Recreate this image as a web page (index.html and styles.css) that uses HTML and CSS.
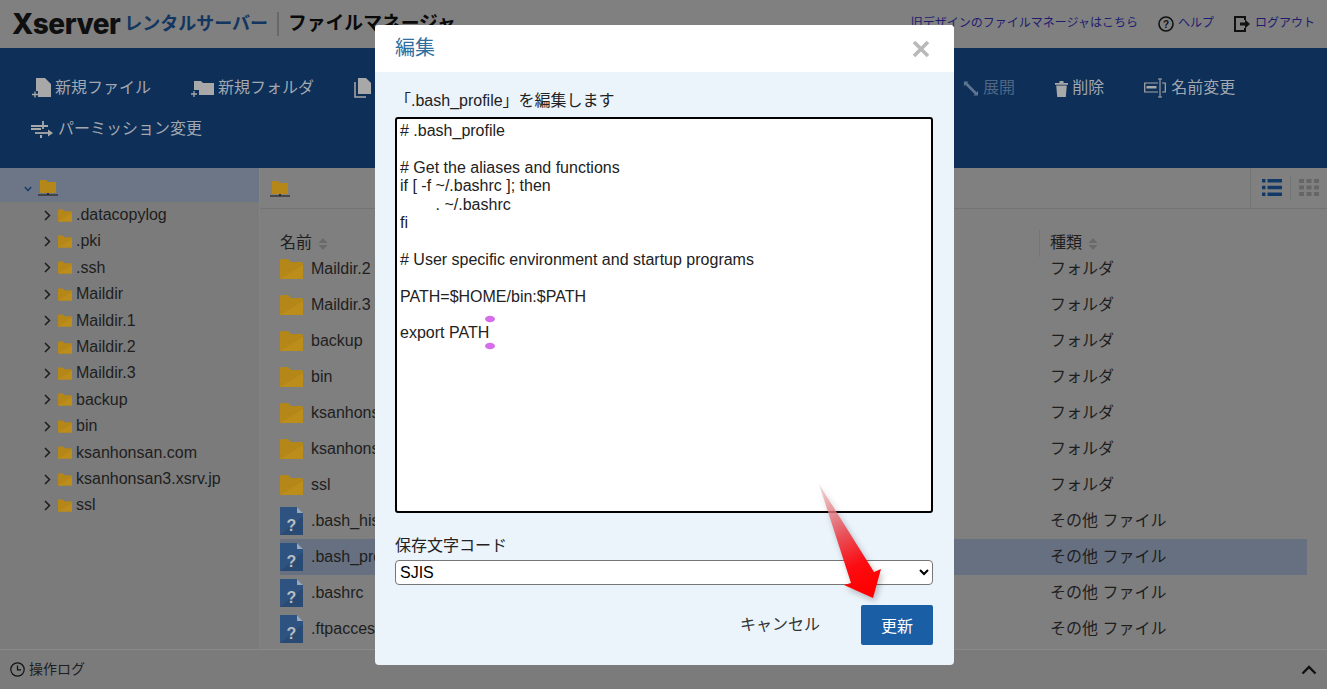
FILE: index.html
```html
<!DOCTYPE html>
<html lang="ja">
<head>
<meta charset="utf-8">
<title>ファイルマネージャ</title>
<link rel="stylesheet" href="styles.css">
</head>
<body>
<svg class="defs" width="0" height="0" aria-hidden="true">
  <symbol id="folder" viewBox="0 0 23 20"><path d="M0 1.5Q0 0 1.500 0H8l3 3h10.500Q23 3 23 4.500V20H0z" fill="#b58719"/><path d="M0 20 23 6V20z" fill="#bd8d1c"/></symbol>
  <symbol id="netfolder" viewBox="0 0 20 17"><path d="M2 0h6l2 2h8v11H2z" fill="#b58719"/><path d="M0 15h20" stroke="#2b2b2b" stroke-width="1.300"/><path d="M10 13v2" stroke="#2b2b2b" stroke-width="2"/></symbol>
  <symbol id="file" viewBox="0 0 23 28"><path d="M0 0h17l6 6v22H0z" fill="#2f5380"/><path d="M17 0l6 6h-6z" fill="#9aa7b8"/><path d="M0 28 23 9v19z" fill="#294a72"/><text x="11.500" y="24" text-anchor="middle" class="q">?</text></symbol>
  <symbol id="sort" viewBox="0 0 10 14"><path d="M5 1 9.500 6H.5zM5 13 .5 8h9z" fill="#6a6a6a"/></symbol>
  <symbol id="chev" viewBox="0 0 7 11"><path d="M1 1l4.500 4.500L1 10" fill="none" stroke="#1c1c1c" stroke-width="1.500"/></symbol>
</svg>

<div class="app">
  <header class="topbar">
    <div class="brand">
      <span class="logo">Xserver</span>
      <span class="service">レンタルサーバー</span>
      <span class="app-name">ファイルマネージャ</span>
    </div>
    <nav class="top-links">
      <a class="link old">旧デザインのファイルマネージャはこちら</a>
      <span class="help"><svg width="16" height="16" viewBox="0 0 16 16"><circle cx="8" cy="8" r="7" fill="none" stroke="#111" stroke-width="1.600"/><text x="8" y="11.500" text-anchor="middle" class="help-q">?</text></svg><a class="link help-text">ヘルプ</a></span>
      <span class="logout"><svg width="17" height="16" viewBox="0 0 17 16"><path d="M11 4V1H1v14h10v-3" fill="none" stroke="#111" stroke-width="2"/><path d="M6 6.500h5V3.500L16 8l-5 4.500V9.500H6z" fill="#111"/></svg><a class="link">ログアウト</a></span>
    </nav>
  </header>

  <div class="toolbar">
    <div class="tool"><svg class="i" width="20" height="20" viewBox="0 0 20 20"><path d="M5 0h9l6 6v13H7v-6H5z" fill="#a8a8a8"/><path d="M1 16.500h6M4 13.500v6" stroke="#a8a8a8" stroke-width="1.300"/></svg>新規ファイル</div>
    <div class="tool"><svg class="i" width="23" height="20" viewBox="0 0 23 20"><path d="M3 3h7l2 2h11v12H8v-5H3z" fill="#a8a8a8"/><path d="M0 16h6M3 13v6" stroke="#a8a8a8" stroke-width="1.300"/></svg>新規フォルダ</div>
    <div class="tool"><svg class="i" width="17" height="20" viewBox="0 0 17 20"><path d="M4 0h8l5 5v11H4z" fill="#a8a8a8"/><path d="M1 4v15h11" fill="none" stroke="#a8a8a8" stroke-width="1.500"/></svg>コピー</div>
    <div class="tool"><svg class="i" width="17" height="20" viewBox="0 0 17 20"><rect x="1" y="4" width="15" height="12" fill="#a8a8a8"/></svg>移動</div>
    <div class="tool"><svg class="i" width="17" height="20" viewBox="0 0 17 20"><rect x="1" y="4" width="15" height="12" fill="#a8a8a8"/></svg>ダウンロード</div>
    <div class="tool"><svg class="i" width="17" height="20" viewBox="0 0 17 20"><rect x="1" y="4" width="15" height="12" fill="#a8a8a8"/></svg>アップロード</div>
    <div class="tool"><svg class="i" width="17" height="20" viewBox="0 0 17 20"><rect x="1" y="4" width="15" height="12" fill="#a8a8a8"/></svg>圧縮</div>
    <div class="tool off"><svg class="i" width="16" height="17" viewBox="0 0 17 17"><path d="M1 1h5L4.500 2.500 14.500 12.500 16 11v5h-5l1.500-1.500L2.500 4.500 1 6z" fill="#5f7490"/></svg>展開</div>
    <div class="tool"><svg class="i" width="13" height="17" viewBox="0 0 13 17"><path d="M0 3h13v1.800H0zM4.500 3V1h4v2M1.200 5.500h10.600L10.800 17H2.200z" fill="#a8a8a8"/></svg>削除</div>
    <div class="tool rename"><svg class="i" width="22" height="20" viewBox="0 0 22 20"><path d="M14 5H.7v9H14" fill="none" stroke="#a8a8a8" stroke-width="1.200"/><path d="M18 5h3.300v9H18" fill="none" stroke="#a8a8a8" stroke-width="1.200"/><rect x="2.500" y="8" width="10" height="2.500" fill="#a8a8a8"/><path d="M14 1h2v18h-2M18 1h-2M18 19h-2" fill="none" stroke="#a8a8a8" stroke-width="1.100"/></svg>名前変更</div>
    <div class="tool perm"><svg class="i" width="22" height="18" viewBox="0 0 22 18"><path d="M0 6h17M0 9h10M12 1v8" stroke="#a8a8a8" stroke-width="1.800" fill="none"/><path d="M4 13h14" stroke="#a8a8a8" stroke-width="1.800"/><path d="M17 9.500 22 13l-5 3.500zM9 15h2v3H9z" fill="#a8a8a8"/></svg>パーミッション変更</div>
  </div>

  <div class="content">
    <aside class="tree">
      <div class="root"><svg class="root-chev" width="8" height="6" viewBox="0 0 8 6"><path d="M.8 1 4 4.500 7.200 1" fill="none" stroke="#123a68" stroke-width="1.300"/></svg><svg width="20" height="17"><use href="#netfolder"/></svg></div>
      <ul class="tree-list">
        <li><svg class="chev" width="7" height="11"><use href="#chev"/></svg><svg class="tf" width="14" height="13"><use href="#folder"/></svg>.datacopylog</li>
        <li><svg class="chev" width="7" height="11"><use href="#chev"/></svg><svg class="tf" width="14" height="13"><use href="#folder"/></svg>.pki</li>
        <li><svg class="chev" width="7" height="11"><use href="#chev"/></svg><svg class="tf" width="14" height="13"><use href="#folder"/></svg>.ssh</li>
        <li><svg class="chev" width="7" height="11"><use href="#chev"/></svg><svg class="tf" width="14" height="13"><use href="#folder"/></svg>Maildir</li>
        <li><svg class="chev" width="7" height="11"><use href="#chev"/></svg><svg class="tf" width="14" height="13"><use href="#folder"/></svg>Maildir.1</li>
        <li><svg class="chev" width="7" height="11"><use href="#chev"/></svg><svg class="tf" width="14" height="13"><use href="#folder"/></svg>Maildir.2</li>
        <li><svg class="chev" width="7" height="11"><use href="#chev"/></svg><svg class="tf" width="14" height="13"><use href="#folder"/></svg>Maildir.3</li>
        <li><svg class="chev" width="7" height="11"><use href="#chev"/></svg><svg class="tf" width="14" height="13"><use href="#folder"/></svg>backup</li>
        <li><svg class="chev" width="7" height="11"><use href="#chev"/></svg><svg class="tf" width="14" height="13"><use href="#folder"/></svg>bin</li>
        <li><svg class="chev" width="7" height="11"><use href="#chev"/></svg><svg class="tf" width="14" height="13"><use href="#folder"/></svg>ksanhonsan.com</li>
        <li><svg class="chev" width="7" height="11"><use href="#chev"/></svg><svg class="tf" width="14" height="13"><use href="#folder"/></svg>ksanhonsan3.xsrv.jp</li>
        <li><svg class="chev" width="7" height="11"><use href="#chev"/></svg><svg class="tf" width="14" height="13"><use href="#folder"/></svg>ssl</li>
      </ul>
    </aside>

    <main class="main">
      <div class="crumb">
        <svg class="crumb-folder" width="20" height="17"><use href="#netfolder"/></svg>
        <div class="views">
          <svg width="20" height="17" viewBox="0 0 20 17"><path d="M0 0h3.500v3.500H0zM5.500 0H20v3.500H5.500zM0 6.800h3.500v3.500H0zM5.500 6.800H20v3.500H5.500zM0 13.500h3.500V17H0zM5.500 13.500H20V17H5.500z" fill="#123a68"/></svg>
          <span class="view-sep"></span>
          <svg width="20" height="17" viewBox="0 0 20 17"><path d="M0 0h5v4H0zM7.500 0h5v4h-5zM15 0h5v4h-5zM0 6.500h5v4H0zM7.500 6.500h5v4h-5zM15 6.500h5v4h-5zM0 13h5v4H0zM7.500 13h5v4h-5zM15 13h5v4h-5z" fill="#666"/></svg>
        </div>
      </div>
      <div class="list">
        <div class="list-head">
          <div class="col-name">名前<svg width="10" height="14"><use href="#sort"/></svg></div>
          <div class="col-kind">種類<svg width="10" height="14"><use href="#sort"/></svg></div>
        </div>
        <div class="row"><div class="col-name"><svg class="ri" width="23" height="20"><use href="#folder"/></svg>Maildir.2</div><div class="col-kind">フォルダ</div></div>
        <div class="row"><div class="col-name"><svg class="ri" width="23" height="20"><use href="#folder"/></svg>Maildir.3</div><div class="col-kind">フォルダ</div></div>
        <div class="row"><div class="col-name"><svg class="ri" width="23" height="20"><use href="#folder"/></svg>backup</div><div class="col-kind">フォルダ</div></div>
        <div class="row"><div class="col-name"><svg class="ri" width="23" height="20"><use href="#folder"/></svg>bin</div><div class="col-kind">フォルダ</div></div>
        <div class="row"><div class="col-name"><svg class="ri" width="23" height="20"><use href="#folder"/></svg>ksanhonsan.com</div><div class="col-kind">フォルダ</div></div>
        <div class="row"><div class="col-name"><svg class="ri" width="23" height="20"><use href="#folder"/></svg>ksanhonsan3.xsrv.jp</div><div class="col-kind">フォルダ</div></div>
        <div class="row"><div class="col-name"><svg class="ri" width="23" height="20"><use href="#folder"/></svg>ssl</div><div class="col-kind">フォルダ</div></div>
        <div class="row"><div class="col-name"><svg class="ri" width="23" height="28"><use href="#file"/></svg>.bash_history</div><div class="col-kind">その他 ファイル</div></div>
        <div class="row selected"><div class="col-name"><svg class="ri" width="23" height="28"><use href="#file"/></svg>.bash_profile</div><div class="col-kind">その他 ファイル</div></div>
        <div class="row"><div class="col-name"><svg class="ri" width="23" height="28"><use href="#file"/></svg>.bashrc</div><div class="col-kind">その他 ファイル</div></div>
        <div class="row"><div class="col-name"><svg class="ri" width="23" height="28"><use href="#file"/></svg>.ftpaccess</div><div class="col-kind">その他 ファイル</div></div>
      </div>
    </main>
  </div>

  <footer class="logbar">
    <div class="log-label"><svg width="15" height="15" viewBox="0 0 15 15"><circle cx="7.500" cy="7.500" r="6.700" fill="none" stroke="#111" stroke-width="1.200"/><path d="M7.500 3.500v4.300h3.500" fill="none" stroke="#111" stroke-width="1.200"/></svg>操作ログ</div>
    <svg width="16" height="10" viewBox="0 0 16 10"><path d="M1.500 8.500 8 2l6.500 6.500" fill="none" stroke="#111" stroke-width="2.400"/></svg>
  </footer>
</div>

<section class="modal">
  <div class="modal-head">
    <h2>編集</h2>
    <svg width="18" height="18" viewBox="0 0 18 18"><path d="M2 2l14 14M16 2 2 16" stroke="#b9b9b9" stroke-width="3.600"/></svg>
  </div>
  <div class="modal-body">
    <label class="lbl first-lbl">「.bash_profile」を編集します</label>
    <textarea class="editor" spellcheck="false"># .bash_profile

# Get the aliases and functions
if [ -f ~/.bashrc ]; then
&#9;. ~/.bashrc
fi

# User specific environment and startup programs

PATH=$HOME/bin:$PATH

export PATH</textarea>
    <label class="lbl enc-label">保存文字コード</label>
    <select class="enc"><option>SJIS</option><option>UTF-8</option><option>EUC-JP</option></select>
    <div class="actions">
      <span class="cancel">キャンセル</span>
      <button class="update" type="button">更新</button>
    </div>
  </div>
</section>

<svg class="marks" width="1327" height="689" viewBox="0 0 1327 689" aria-hidden="true">
  <defs>
    <linearGradient id="arrow" gradientUnits="userSpaceOnUse" x1="822" y1="488" x2="868" y2="590">
      <stop offset="0" stop-color="#e9a9ae" stop-opacity=".55"/>
      <stop offset=".45" stop-color="#e8535c"/>
      <stop offset=".75" stop-color="#fb0d12"/>
      <stop offset="1" stop-color="#ff0000"/>
    </linearGradient>
  </defs>
  <ellipse cx="490" cy="319" rx="5" ry="3.200" fill="#d56ee8"/>
  <ellipse cx="490" cy="346" rx="5" ry="3.200" fill="#d56ee8"/>
  <path class="arrow" d="M819 484 874 572 881 569 873 598 844 585 851 583z" fill="url(#arrow)"/>
</svg>
</body>
</html>
```

FILE: styles.css
```css
* { box-sizing: border-box; }
html, body { margin: 0; height: 100%; overflow: hidden; }
body {
  position: relative;
  background: #808080;
  color: #1e1e1e;
  font: 16px/1.15 "Liberation Sans", "Noto Sans CJK JP", sans-serif;
}
.defs { position: absolute; }
.q { font: bold 16px "Liberation Sans", sans-serif; fill: #b8bcc2; }
.help-q { font: bold 10px "Liberation Sans", sans-serif; fill: #111; }

.app { display: flex; flex-direction: column; height: 689px; }

.topbar {
  height: 48px; flex: none;
  display: flex; align-items: center; justify-content: space-between;
  padding: 0 12px 0 12px;
  background: #808080;
}
.brand { display: flex; align-items: center; }
.logo { font: 800 28px/34px "Inter", sans-serif; color: #0f0f0f; letter-spacing: -.5px; margin-right: 4px; }
.service { font-size: 18px; font-weight: 700; color: #12365f; padding-right: 9px; }
.app-name {
  font-size: 18.800px; font-weight: 700; color: #0a0a0a;
  border-left: 2px solid #686868; padding-left: 9px; line-height: 24px;
}
.top-links { display: flex; align-items: center; font-size: 12px; }
.link { color: #1d1d70; }
.old { margin-right: 20px; }
.help, .logout { display: flex; align-items: center; }
.help { gap: 4px; margin-right: 20px; }
.logout { gap: 4px; }

.toolbar {
  height: 120px; flex: none;
  display: flex; flex-wrap: wrap; align-content: flex-start;
  column-gap: 40px; row-gap: 1px;
  padding: 20px 0 0 31px;
  background: #0d2f58;
  color: #a3a8b0;
}
.tool { display: flex; align-items: center; gap: 4px; height: 40px; white-space: nowrap; }
.tool.off { color: #4f6785; }
.tool.rename, .tool.perm { gap: 5px; }

.content { flex: 1; min-height: 0; display: flex; }
.tree { width: 260px; flex: none; background: #7b7b7b; border-right: 1px solid #838383; }
.root {
  height: 34px; padding: 7px 0 0 24px;
  display: flex; align-items: center; gap: 6px;
  background: #6c7686;
}
.tree-list { list-style: none; margin: 0; padding: 0; }
.tree-list li { height: 26.400px; display: flex; align-items: center; padding-left: 44px; color: #1e1e1e; }
.chev { margin-right: 7px; }
.tf { margin-right: 4px; }

.main { flex: 1; min-width: 0; display: flex; flex-direction: column; overflow: hidden; background: #7f7f7f; }
.crumb {
  height: 41px; flex: none;
  display: flex; align-items: center; justify-content: space-between;
  padding: 0 0 0 10px;
  background: #808080;
  border-bottom: 1px solid #747474;
}
.crumb-folder { margin-top: 3px; }
.views {
  height: 100%; width: 77px;
  display: flex; align-items: center; gap: 8px;
  padding: 0 0 1px 11px;
  border-left: 1px solid #757575;
}
.view-sep { width: 1px; height: 24px; background: #747474; }

.list { padding: 21px 20px 0; }
.list-head { display: flex; height: 21px; }
.list-head .col-name, .list-head .col-kind { height: 27px; gap: 6px; align-items: center; display: flex; }
.list-head .col-kind { position: relative; }
.list-head .col-kind::before {
  content: ""; position: absolute; left: -11px; top: 0; bottom: 0; width: 1px; background: #757575;
}
.col-name { width: 770px; flex: none; display: flex; align-items: center; }
.col-kind { flex: 1; }
.row { height: 36px; display: flex; align-items: center; }
.row.selected { background: #667080; }
.ri { margin-right: 8px; flex: none; }

.logbar {
  height: 40px; flex: none;
  display: flex; align-items: center; justify-content: space-between;
  padding: 0 10px 0 10px;
  background: #7b7b7b;
  border-top: 1px solid #8a8a8a;
  position: relative;
}
.log-label { display: flex; align-items: center; gap: 4px; font-size: 14px; color: #1e1e1e; }

.modal {
  position: absolute; left: 375px; top: 25px;
  width: 579px; height: 640px;
  border-radius: 4px;
  overflow: hidden;
  background: #ebf3fb;
  display: flex; flex-direction: column;
}
.modal-head {
  height: 47px; flex: none;
  display: flex; align-items: center; justify-content: space-between;
  padding: 0 24px 0 20px;
  background: #fff;
}
.modal-head h2 { margin: 0; font-size: 20px; font-weight: 400; color: #2f6f9f; }
.modal-body { flex: 1; display: flex; flex-direction: column; padding: 18px 21px 20px 20px; }
.lbl { display: block; height: 18px; line-height: 20px; color: #222; }
.first-lbl { line-height: 20px; padding-top: 1px; }
.editor {
  display: block;
  width: 100%; height: 396px; margin: 9px 0 0;
  padding: 3px;
  border: 2px solid #000; border-radius: 3px;
  background: #fff; color: #222;
  font: 16px/18.400px "Liberation Sans", sans-serif;
  resize: none; outline: none; overflow: hidden;
  white-space: pre;
}
.enc-label { margin-top: 23px; }
.enc {
  display: block;
  width: 100%; height: 25px; margin-top: 6px;
  font: 16px "Liberation Sans", sans-serif; color: #000;
  background: #fff; border: 1px solid #767676; border-radius: 4px;
}
.actions { display: flex; justify-content: flex-end; align-items: center; margin-top: 20px; }
.cancel { color: #333; margin-right: 41px; }
.update {
  width: 72px; height: 40px; padding: 0;
  background: #1a5ea6; color: #fff;
  font: 16px "Liberation Sans", "Noto Sans CJK JP", sans-serif;
  border: 0; border-radius: 2px;
}

.marks { position: absolute; left: 0; top: 0; pointer-events: none; }
.arrow { filter: drop-shadow(2px 3px 3px rgba(0,0,0,.25)); }
```
